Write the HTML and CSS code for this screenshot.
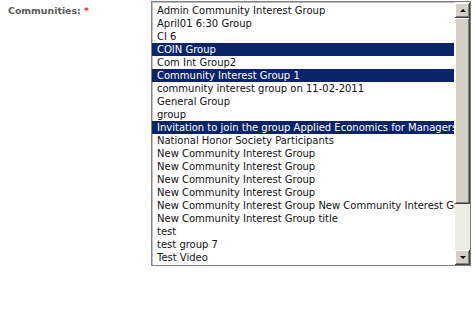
FILE: index.html
```html
<!DOCTYPE html>
<html>
<head>
<meta charset="utf-8">
<link rel="stylesheet" href="styles.css">
</head>
<body>
<div class="field">
  <div class="label">Communities: <span class="req">*</span></div>
  <div class="listbox">
    <div class="items">
      <div class="opt">Admin Community Interest Group</div>
      <div class="opt">April01 6:30 Group</div>
      <div class="opt">CI 6</div>
      <div class="opt sel">COIN Group</div>
      <div class="opt">Com Int Group2</div>
      <div class="opt sel">Community Interest Group 1</div>
      <div class="opt">community interest group on 11-02-2011</div>
      <div class="opt">General Group</div>
      <div class="opt">group</div>
      <div class="opt sel">Invitation to join the group Applied Economics for Managers</div>
      <div class="opt">National Honor Society Participants</div>
      <div class="opt">New Community Interest Group</div>
      <div class="opt">New Community Interest Group</div>
      <div class="opt">New Community Interest Group</div>
      <div class="opt">New Community Interest Group</div>
      <div class="opt">New Community Interest Group New Community Interest Group</div>
      <div class="opt">New Community Interest Group title</div>
      <div class="opt">test</div>
      <div class="opt">test group 7</div>
      <div class="opt">Test Video</div>
    </div>
    <div class="scrollbar">
      <div class="btn up"><span class="arrow-up"></span></div>
      <div class="track">
        <div class="thumb"></div>
      </div>
      <div class="btn down"><span class="arrow-down"></span></div>
    </div>
  </div>
</div>
</body>
</html>
```
FILE: styles.css
```css
html, body {
  margin: 0;
  padding: 0;
  background: #ffffff;
}
body {
  font-family: "DejaVu Sans", Verdana, sans-serif;
  font-size: 10px;
  width: 474px;
  height: 310px;
  overflow: hidden;
}
.field {
  display: flex;
  align-items: flex-start;
  padding-top: 1px;
}
.label {
  width: 143px;
  padding-left: 8px;
  padding-top: 4px;
  font-weight: bold;
  font-size: 9.4px;
  color: #5a5a5a;
  white-space: nowrap;
}
.req {
  color: #cc3333;
}
.listbox {
  display: flex;
  width: 318px;
  height: 263px;
  border: 1px solid #7f7f7f;
  box-shadow: inset 1px 1px 0 #c0c0c0;
  background: #fff;
  overflow: hidden;
}
.items {
  flex: 1;
  overflow: hidden;
  padding-top: 2px;
}
.opt {
  height: 13px;
  line-height: 13px;
  padding-left: 5px;
  white-space: nowrap;
  overflow: hidden;
  color: #111;
  font-size: 10px;
}
.opt.sel {
  background: #0a246a;
  color: #fff;
  margin-right: 1px;
}
.scrollbar {
  width: 15px;
  display: flex;
  flex-direction: column;
  background: #eeede5;
  padding-top: 1px;
}
.btn {
  height: 15px;
  background: #d4d0c8;
  box-shadow: inset -1px -1px 0 #404040, inset 1px 1px 0 #ffffff, inset -2px -2px 0 #808080;
  display: flex;
  align-items: center;
  justify-content: center;
  flex: none;
}
.arrow-up {
  width: 0;
  height: 0;
  border-left: 3px solid transparent;
  border-right: 3px solid transparent;
  border-bottom: 3px solid #000;
}
.arrow-down {
  width: 0;
  height: 0;
  border-left: 3px solid transparent;
  border-right: 3px solid transparent;
  border-top: 3px solid #000;
}
.track {
  flex: 1;
  background: #eeede5;
}
.thumb {
  height: 186px;
  background: #d4d0c8;
  box-shadow: inset -1px -1px 0 #404040, inset 1px 1px 0 #ffffff, inset -2px -2px 0 #808080;
}
```
